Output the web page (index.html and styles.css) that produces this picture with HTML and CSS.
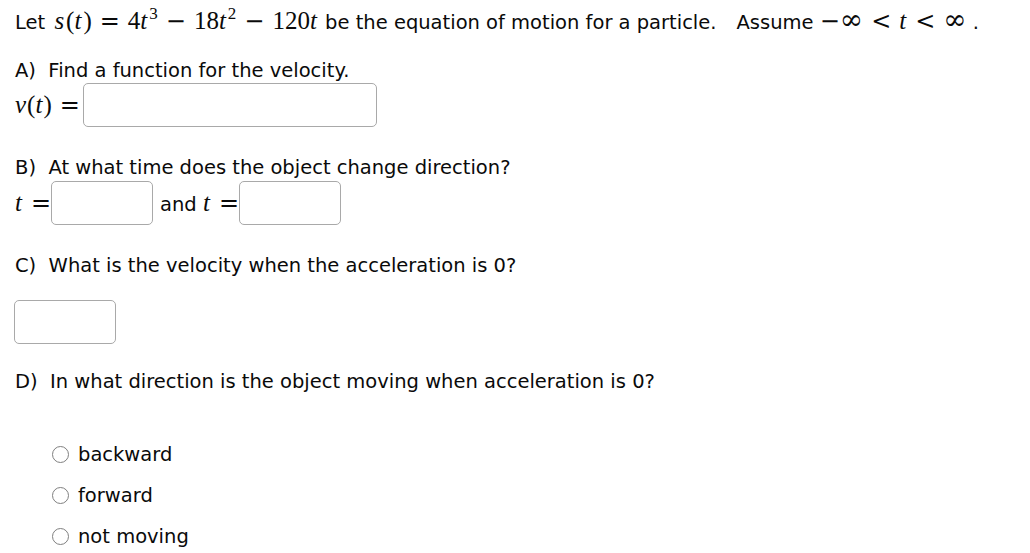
FILE: index.html
```html
<!DOCTYPE html>
<html>
<head>
<meta charset="utf-8">
<link rel="stylesheet" href="styles.css">
</head>
<body>
<div class="page">
  <p class="intro">Let <span class="m lead"><i>s</i>(<i>t</i>)<span class="rel">=</span>4<i>t</i><sup>3</sup><span class="bin">−</span>18<i>t</i><sup>2</sup><span class="bin">−</span>120<i>t</i></span> be the equation of motion for a particle.<span class="gap"></span>Assume <span class="m"><span class="sym">−</span><span class="sym inf">∞</span><span class="rel">&lt;</span><i>t</i><span class="rel">&lt;</span><span class="sym inf">∞</span></span> .</p>

  <p class="q qa">A) &nbsp;Find a function for the velocity.</p>
  <div class="row rowa">
    <span class="m"><i>v</i>(<i>t</i>)<span class="rel last">=</span></span><span class="box wide"></span>
  </div>

  <p class="q qb">B) &nbsp;At what time does the object change direction?</p>
  <div class="row">
    <span class="m"><i>t</i><span class="rel last">=</span></span><span class="box"></span>
    <span class="and">and <span class="m"><i>t</i><span class="rel last">=</span></span></span><span class="box"></span>
  </div>

  <p class="q qc">C) &nbsp;What is the velocity when the acceleration is 0?</p>
  <div class="row rowc"><span class="box"></span></div>

  <p class="q qd">D) &nbsp;In what direction is the object moving when acceleration is 0?</p>
  <div class="radios">
    <label class="opt"><span class="radio"></span>backward</label>
    <label class="opt"><span class="radio"></span>forward</label>
    <label class="opt"><span class="radio"></span>not moving</label>
  </div>
</div>
</body>
</html>
```
FILE: styles.css
```css
html, body { margin: 0; padding: 0; background: #fff; }
.page {
  padding: 0 15px;
  font-family: "DejaVu Sans", sans-serif;
  font-size: 19.5px;
  color: #0a0a0a;
}
p { margin: 0; }
.intro { padding-top: 7px; height: 35px; line-height: 26px; white-space: nowrap; }
.m { font-family: "Liberation Serif", serif; font-size: 25px; }
.m.lead { margin-left: 3px; }
.m i { font-style: italic; margin-right: 1px; }
.m.lead i { margin-right: 2px; }
.m sup { font-size: 17px; vertical-align: 10px; line-height: 0; }
.rel, .bin, .sym { display: inline-block; font-family: "DejaVu Serif", serif; font-size: 24px; }
.rel { margin: 0 8px; }
.rel.last { margin-right: 0; }
.bin { margin: 0 8px; }
.inf { font-size: 28px; }
.gap { display: inline-block; width: 20px; }
.q { line-height: 24px; }
.qa { margin-top: 17px; }
.row { display: flex; align-items: center; height: 46px; }
.rowa { margin-top: -1px; }
.box {
  display: inline-block; box-sizing: border-box; width: 102px; height: 44px;
  border: 1px solid #a9a9a9; border-radius: 5px; background: #fff;
  margin-left: 0;
}
.box.wide { width: 294px; margin-left: 3px; }
.and { margin-left: 7px; }
.qb { margin-top: 28px; }
.qc { margin-top: 28px; }
.rowc { margin-top: 21px; }
.rowc .box { margin-left: -1px; }
.qd { margin-top: 25px; }
.radios { display: flex; flex-direction: column; padding-left: 37px; margin-top: 48px; gap: 17px; }
.opt { display: flex; align-items: center; height: 24px; }
.radio {
  box-sizing: border-box; width: 17px; height: 17px; border: 1.5px solid #808080; border-radius: 50%;
  margin-right: 9px; background: #fff;
}
```
